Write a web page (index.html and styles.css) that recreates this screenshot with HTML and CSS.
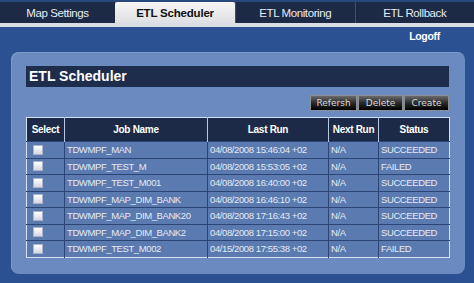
FILE: index.html
```html
<!DOCTYPE html>
<html lang="en">
<head>
    <meta charset="UTF-8">
    <title>ETL Scheduler</title>
    <link rel="stylesheet" href="styles.css">
</head>
<body>
    <div class="tabs">
        <div class="tab">Map Settings</div>
        <div class="tab active">ETL Scheduler</div>
        <div class="tab">ETL Monitoring</div>
        <div class="tab">ETL Rollback</div>
    </div>
    <div class="tab-rule"></div>

    <div class="topbar">
        <a class="logoff" href="#">Logoff</a>
    </div>

    <div class="panel">
        <h1 class="panel-title">ETL Scheduler</h1>

        <div class="actions">
            <button>Refersh</button>
            <button>Delete</button>
            <button>Create</button>
        </div>

        <table class="jobs">
            <thead>
                <tr>
                    <th class="c-select">Select</th>
                    <th class="c-name">Job Name</th>
                    <th class="c-last">Last Run</th>
                    <th class="c-next">Next Run</th>
                    <th class="c-status">Status</th>
                </tr>
            </thead>
            <tbody>
                <tr><td class="c-select"><span class="box"></span></td><td>TDWMPF_MAN</td><td>04/08/2008 15:46:04 +02</td><td>N/A</td><td>SUCCEEDED</td></tr>
                <tr><td class="c-select"><span class="box"></span></td><td>TDWMPF_TEST_M</td><td>04/08/2008 15:53:05 +02</td><td>N/A</td><td>FAILED</td></tr>
                <tr><td class="c-select"><span class="box"></span></td><td>TDWMPF_TEST_M001</td><td>04/08/2008 16:40:00 +02</td><td>N/A</td><td>SUCCEEDED</td></tr>
                <tr><td class="c-select"><span class="box"></span></td><td>TDWMPF_MAP_DIM_BANK</td><td>04/08/2008 16:46:10 +02</td><td>N/A</td><td>SUCCEEDED</td></tr>
                <tr><td class="c-select"><span class="box"></span></td><td>TDWMPF_MAP_DIM_BANK20</td><td>04/08/2008 17:16:43 +02</td><td>N/A</td><td>SUCCEEDED</td></tr>
                <tr><td class="c-select"><span class="box"></span></td><td>TDWMPF_MAP_DIM_BANK2</td><td>04/08/2008 17:15:00 +02</td><td>N/A</td><td>SUCCEEDED</td></tr>
                <tr><td class="c-select"><span class="box"></span></td><td>TDWMPF_TEST_M002</td><td>04/15/2008 17:55:38 +02</td><td>N/A</td><td>FAILED</td></tr>
            </tbody>
        </table>
    </div>
</body>
</html>
```

FILE: styles.css
```css
/* Basic Reset */
* {
    margin: 0;
    padding: 0;
    box-sizing: border-box;
}

body {
    font-family: "Liberation Sans", Arial, sans-serif;
    background-color: #2b5192;
    width: 474px;
    height: 283px;
    overflow: hidden;
}

/* Tabs */
.tabs {
    display: flex;
    height: 23px;
    padding-top: 2px;
    background-color: #28487e;
}

.tab {
    flex: 1;
    display: flex;
    align-items: center;
    justify-content: center;
    padding-top: 1px;
    background-color: #1c2a46;
    color: #e8ecf4;
    font-size: 11.5px;
    letter-spacing: -0.4px;
    border-left: 1px solid #3a4f76;
}

.tab:first-child {
    flex: 0 0 115px;
    border-left: none;
}

.tab.active {
    flex: 0 0 120px;
    background: linear-gradient(#f6f6f6, #dedfe2);
    color: #111;
    font-weight: bold;
    letter-spacing: -0.2px;
    border-left: none;
    border-radius: 2px 2px 0 0;
}

.tab-rule {
    height: 4px;
    background-color: #d9dde5;
}

/* Logoff */
.topbar {
    display: flex;
    justify-content: flex-end;
    align-items: flex-start;
    height: 25px;
    padding: 3px 34px 0 0;
}

.logoff {
    color: #ffffff;
    font-size: 10.5px;
    font-weight: bold;
    letter-spacing: -0.3px;
    text-decoration: none;
}

/* Panel */
.panel {
    margin: 0 9px 0 11px;
    padding: 14px 16px 16px 15px;
    background-color: #6b8abf;
    border-radius: 8px;
    box-shadow: inset 1px 1px 0 #7c99c9;
}

.panel-title {
    height: 21px;
    padding-left: 3px;
    background-color: #1e2d4c;
    color: #ffffff;
    font-size: 14px;
    line-height: 21px;
}

/* Buttons */
.actions {
    display: flex;
    justify-content: flex-end;
    gap: 1px;
    margin-top: 8px;
}

.actions button {
    height: 16px;
    padding: 0 4px;
    font-family: "DejaVu Sans", Verdana, sans-serif;
    font-size: 9px;
    color: #d8d8d8;
    background: linear-gradient(#6a6a6a, #2a2a2a 50%, #000000);
    border: 1px solid #8a8e96;
    cursor: pointer;
}

.actions button:first-child {
    width: 47px;
}

.actions button:nth-child(2) {
    width: 45px;
}

.actions button:last-child {
    width: 45px;
}

/* Table */
.jobs {
    width: 423px;
    margin-top: 6px;
    table-layout: fixed;
    border-collapse: collapse;
    border: 1px solid #d6e0f0;
}

.jobs thead tr {
    height: 24px;
}

.jobs tbody tr {
    height: 16.5px;
}

.jobs th {
    background-color: #1c2a47;
    color: #ffffff;
    font-size: 10px;
    font-weight: bold;
    letter-spacing: -0.3px;
    border-left: 1px solid #b8c8e2;
}

.jobs th:first-child {
    border-left: none;
}

.jobs td {
    padding: 0 0 0 2px;
    background-color: #5b7ab0;
    color: #e4eaf5;
    font-size: 9.5px;
    letter-spacing: -0.4px;
    border-top: 1px solid #2d4574;
    border-left: 1px solid #2d4574;
    white-space: nowrap;
    overflow: hidden;
}

.jobs td:first-child {
    border-left: none;
}

.c-select { width: 38px; }
.c-name { width: 143px; }
.c-last { width: 121px; }
.c-next { width: 50px; }
.c-status { width: 71px; }

.jobs td.c-select {
    padding-left: 6px;
}

.box {
    display: block;
    width: 10px;
    height: 10px;
    background: linear-gradient(#ffffff, #d4d8e0);
    border: 1px solid #aab4c6;
}
```
